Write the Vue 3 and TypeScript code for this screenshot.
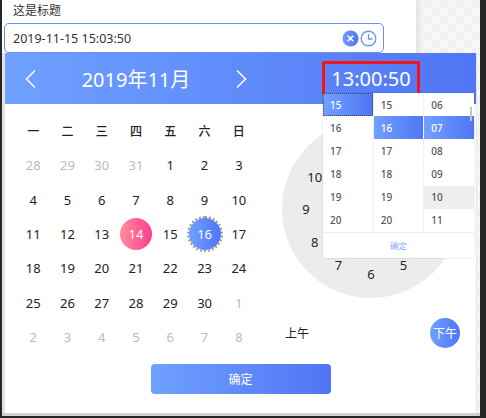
<script setup lang="ts">
interface Day { n: number; muted?: boolean; kind?: string }
const weekdays = ['一', '二', '三', '四', '五', '六', '日']
const days: Day[] = [
  ...[28, 29, 30, 31].map((n) => ({ n, muted: true })),
  ...Array.from({ length: 30 }, (_, i) => ({
    n: i + 1,
    kind: i + 1 === 14 ? 'today' : i + 1 === 16 ? 'picked' : '',
  })),
  ...[1, 2, 3, 4, 5, 6, 7, 8].map((n) => ({ n, muted: true })),
]
const hours = [5, 6, 7, 8, 9, 10].map((n) => {
  const a = (n * Math.PI) / 6
  return { n, x: 89 + 65 * Math.sin(a), y: 89 - 65 * Math.cos(a) }
})
const columns = [
  { rows: ['15', '16', '17', '18', '19', '20'], active: 0, focus: true, hover: -1 },
  { rows: ['15', '16', '17', '18', '19', '20'], active: 1, focus: false, hover: -1 },
  { rows: ['06', '07', '08', '09', '10', '11'], active: 1, focus: false, hover: 4 },
]
</script>

<template>
  <div class="page">
    <div class="stage">
      <div class="top">
        <div class="form">
          <div class="label">这是标题</div>
          <div class="input">
            <span class="value">2019-11-15 15:03:50</span>
            <span class="icons">
              <svg width="17" height="17" viewBox="0 0 17 17">
                <defs>
                  <linearGradient id="cg" x1="0" x2="1" y1="0" y2="0">
                    <stop offset="0" stop-color="#6f9dfb" />
                    <stop offset="1" stop-color="#4f74f0" />
                  </linearGradient>
                </defs>
                <circle cx="8.5" cy="8.5" r="8" fill="url(#cg)" />
                <path d="M5.7 5.7l5.6 5.6M11.3 5.7l-5.6 5.6" stroke="#fff" stroke-width="1.6" fill="none" />
              </svg>
              <svg width="17" height="17" viewBox="0 0 17 17">
                <circle cx="8.5" cy="8.5" r="7.3" fill="#fff" stroke="#6f93f6" stroke-width="1.4" />
                <path d="M8.5 4v5h4" stroke="#6f93f6" stroke-width="1.4" fill="none" />
              </svg>
            </span>
          </div>
        </div>
        <div class="checker"></div>
      </div>
      <div class="strip"></div>

      <div class="popup">
        <div class="header">
          <div class="month">
            <svg width="13" height="20" viewBox="0 0 13 20">
              <path d="M11 1.5 2.5 10 11 18.5" stroke="#fff" stroke-width="1.5" fill="none" />
            </svg>
            <span>2019年11月</span>
            <svg width="13" height="20" viewBox="0 0 13 20">
              <path d="M2 1.5 10.5 10 2 18.5" stroke="#fff" stroke-width="1.5" fill="none" />
            </svg>
          </div>
          <div class="time">13:00:50</div>
        </div>
        <div class="redbox"></div>

        <div class="body">
          <div class="grid">
            <div v-for="w in weekdays" :key="w" class="cell week">{{ w }}</div>
            <div
              v-for="(d, i) in days"
              :key="i"
              class="cell"
              :class="{ muted: d.muted }"
            >
              <span class="num" :class="d.kind">{{ d.n }}</span>
            </div>
          </div>
          <div class="clockside">
            <div class="clock">
              <span
                v-for="h in hours"
                :key="h.n"
                class="hour"
                :style="{ left: h.x + 'px', top: h.y + 'px' }"
              >{{ h.n }}</span>
            </div>
            <div class="ampm">
              <span class="period">上午</span>
              <span class="period on">下午</span>
            </div>
          </div>
        </div>

        <div class="footer">
          <div class="ok">确定</div>
        </div>

        <div class="dropdown">
          <div class="cols">
            <div v-for="(c, ci) in columns" :key="ci" class="col">
              <div
                v-for="(r, ri) in c.rows"
                :key="r"
                class="opt"
                :class="{
                  active: ri === c.active,
                  focus: c.focus && ri === c.active,
                  hover: ri === c.hover,
                }"
              >{{ r }}</div>
            </div>
            <div class="scrollbar"></div>
          </div>
          <div class="dd-foot">确定</div>
        </div>
      </div>
    </div>
  </div>
</template>

<style scoped>
.page {
  width: 486px;
  height: 418px;
  background: #262626;
  overflow: hidden;
  font-family: "Noto Sans", "Noto Sans CJK SC", sans-serif;
  color: #222;
}
.stage {
  position: relative;
  width: 478px;
  height: 416px;
  margin-left: 2px;
  display: flex;
  flex-direction: column;
}
.top {
  flex: 1;
  display: flex;
  min-height: 0;
}
.strip {
  height: 3px;
  background: #d2d2d2;
}
.form {
  width: 414px;
  background: #fff;
  padding: 0 0 0 2px;
  box-sizing: border-box;
}
.label {
  height: 23px;
  line-height: 22px;
  padding-left: 9px;
  font-size: 12px;
  color: #333;
}
.input {
  width: 380px;
  height: 30px;
  box-sizing: border-box;
  border: 1px solid #6b8ff5;
  border-radius: 5px;
  display: flex;
  align-items: center;
  justify-content: space-between;
  padding: 0 6px 0 8px;
  font-size: 12.5px;
  color: #333;
}
.icons {
  display: flex;
  gap: 1px;
}
.icons svg {
  display: block;
}
.checker {
  flex: 1;
  background-color: #f7f7f7;
  background-image:
    linear-gradient(45deg, #f1f1f1 25%, transparent 25%, transparent 75%, #f1f1f1 75%),
    linear-gradient(45deg, #f1f1f1 25%, transparent 25%, transparent 75%, #f1f1f1 75%);
  background-size: 16px 16px;
  background-position: 0 0, 8px 8px;
  box-shadow: inset 6px 0 6px -4px #dcdcdc;
}
.popup {
  position: absolute;
  left: 0;
  top: 53px;
  width: 475px;
  height: 360px;
  box-sizing: border-box;
  background: #fff;
  border-left: 3px solid #e2e2e2;
  border-right: 1px solid #e6e6e6;
}
.header {
  height: 51px;
  padding-left: 11px;
  display: flex;
  align-items: center;
  color: #fff;
  background: linear-gradient(90deg, #6fa1ff, #5075f5);
}
.month {
  width: 240px;
  box-sizing: border-box;
  padding: 0 8px;
  display: flex;
  align-items: center;
  justify-content: space-between;
  font-size: 20px;
}
.month svg {
  display: block;
}
.time {
  margin-left: 26px;
  width: 178px;
  text-align: center;
  font-size: 20px;
}
.redbox {
  position: absolute;
  left: 317px;
  top: 8px;
  width: 98px;
  height: 34px;
  box-sizing: border-box;
  border: 3px solid #f4141a;
  border-bottom: 0;
  border-radius: 3px 3px 0 0;
}
.body {
  padding: 10px 0 0 11px;
  display: flex;
}
.grid {
  width: 240px;
  display: grid;
  grid-template-columns: repeat(7, 1fr);
  grid-auto-rows: 34.29px;
}
.cell {
  display: flex;
  align-items: center;
  justify-content: center;
  font-size: 13px;
  color: #222;
}
.week {
  font-size: 12px;
  font-weight: 500;
}
.muted {
  color: #bbb;
}
.num {
  width: 32px;
  height: 32px;
  display: flex;
  align-items: center;
  justify-content: center;
  border-radius: 50%;
}
.today {
  color: #fff;
  background: linear-gradient(90deg, #ff8e9a, #ff3d8e);
}
.picked {
  color: #fff;
  background: linear-gradient(90deg, #6fa1ff, #5075f5);
  outline: 2px dotted #9a9a9a;
  outline-offset: 0;
}
.clockside {
  margin-left: 26px;
  width: 178px;
  padding-top: 6px;
}
.clock {
  position: relative;
  width: 178px;
  height: 178px;
  border-radius: 50%;
  background: #ececec;
}
.hour {
  position: absolute;
  transform: translate(-50%, -50%);
  font-size: 13px;
}
.ampm {
  margin-top: 20px;
  display: flex;
  justify-content: space-between;
}
.period {
  width: 30px;
  height: 30px;
  border-radius: 50%;
  display: flex;
  align-items: center;
  justify-content: center;
  font-size: 12px;
  white-space: nowrap;
}
.period.on {
  color: #fff;
  background: linear-gradient(90deg, #6fa1ff, #5075f5);
}
.footer {
  margin-top: 10px;
  display: flex;
  justify-content: center;
}
.ok {
  width: 180px;
  height: 30px;
  border-radius: 4px;
  color: #fff;
  font-size: 12px;
  display: flex;
  align-items: center;
  justify-content: center;
  background: linear-gradient(90deg, #6fa1ff, #5075f5);
}
.dropdown {
  position: absolute;
  left: 318px;
  top: 40px;
  width: 151px;
  height: 165px;
  background: #fff;
  box-shadow: 0 0 2px rgba(0, 0, 0, 0.15);
  display: flex;
  flex-direction: column;
}
.cols {
  position: relative;
  height: 139px;
  display: flex;
  gap: 1px;
  background: #eef0f6;
}
.col {
  flex: 1;
  background: #fff;
}
.opt {
  height: 23.17px;
  box-sizing: border-box;
  display: flex;
  align-items: center;
  padding-left: 7px;
  font-size: 10px;
  font-weight: 500;
  color: #555;
}
.opt.active {
  color: #fff;
  background: linear-gradient(90deg, #6fa1ff, #5075f5);
}
.opt.focus {
  outline: 1px dotted #444;
  outline-offset: -1px;
}
.opt.hover {
  background: #eee;
}
.scrollbar {
  position: absolute;
  right: 2px;
  top: 14px;
  width: 2px;
  height: 14px;
  background: #c4c4c4;
}
.dd-foot {
  flex: 1;
  border-top: 1px solid #eee;
  padding-bottom: 2px;
  display: flex;
  align-items: center;
  justify-content: center;
  font-size: 8.5px;
  color: #8aa8ff;
}
</style>
